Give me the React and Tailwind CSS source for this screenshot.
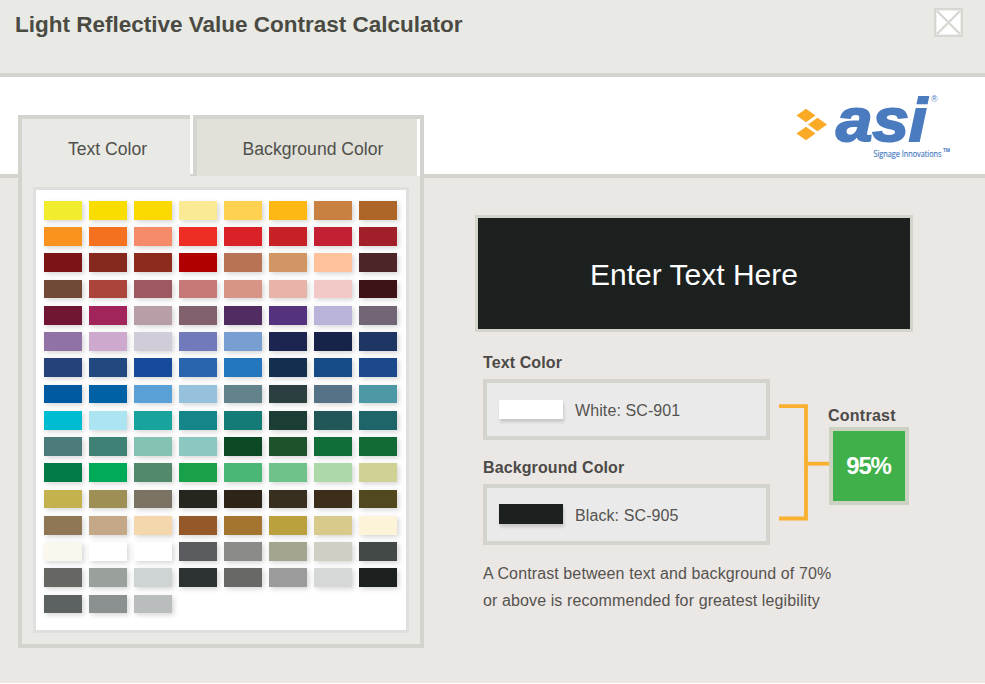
import { useState } from 'react'

const SWATCHES = [
  '#f2ec2f', '#f9dd00', '#fcd900', '#fbea94', '#fed150', '#fdb813', '#c98141', '#ad6627',
  '#f7931e', '#f47120', '#f68b69', '#ee2d24', '#da2128', '#c52126', '#c32033', '#a11f29',
  '#7c1416', '#85281e', '#8d2b1d', '#b10000', '#b77354', '#d29564', '#ffc29d', '#4b2528',
  '#714937', '#ab453b', '#9d5862', '#c67a77', '#d79585', '#e8b4a9', '#f3c9c7', '#3d1317',
  '#701632', '#a1255a', '#b89ea6', '#82616f', '#512c61', '#54327d', '#bab4da', '#726576',
  '#9172a4', '#cca9cd', '#d0cdd8', '#717bbc', '#799ed1', '#1b254f', '#18234a', '#1f3665',
  '#25427a', '#22497f', '#184a9b', '#2865ae', '#2277bd', '#122f4e', '#164d86', '#1b498b',
  '#005aa2', '#0061a4', '#58a0d5', '#96c1dc', '#63838c', '#2b3f40', '#567286', '#4d98a5',
  '#00bcd1', '#ade4f2', '#18a49d', '#148689', '#147b76', '#1b3d35', '#215759', '#1d6569',
  '#4b7c7b', '#3f8175', '#86c2b4', '#8cc8c1', '#0b4824', '#1d522a', '#116e38', '#126b35',
  '#007a47', '#00aa59', '#51896a', '#19a04b', '#4ab777', '#70c28b', '#acd8aa', '#cfd294',
  '#c3b24d', '#9e8f54', '#7a7263', '#25271f', '#2e2418', '#382f1f', '#3c2e1a', '#524820',
  '#8f7756', '#c5a888', '#f4d7ad', '#955829', '#a47530', '#bba03e', '#d7ca8b', '#fcf3d9',
  '#faf7ef', '#ffffff', '#ffffff', '#5b5c5f', '#8b8c87', '#a3a58f', '#cfcfc3', '#434946',
  '#666763', '#9aa09c', '#ced4d4', '#2d3333', '#686867', '#9b9b9b', '#d6d8d8', '#1c211f',
  '#5b6261', '#8a9190', '#babdbe',
]

function CloseButton() {
  return (
    <button title="Close" className="w-[29px] h-[29px]">
      <svg viewBox="0 0 29 29" className="block w-full h-full" fill="#fff" stroke="#d7d8d2" strokeWidth="2.4">
        <rect x="1.2" y="1.2" width="26.6" height="26.6" />
        <path d="M3 3L26 26M26 3L3 26" />
      </svg>
    </button>
  )
}

function Logo() {
  return (
    <svg width="160" height="74" viewBox="0 0 160 74" className="block overflow-visible" fontFamily="'Liberation Sans', Arial, sans-serif">
      <g fill="#fbaa26">
        <path d="M5.500 20.500L15 13.800L24.500 20.500L15 27.200Z" />
        <path d="M17 29.500L26.500 22.800L36 29.500L26.500 36.200Z" />
        <path d="M5.500 38.500L15 31.800L24.500 38.500L15 45.200Z" />
      </g>
      <text x="45" y="45.500" fontSize="62" fontWeight="700" fontStyle="italic" fill="#4b7bbf" stroke="#4b7bbf" strokeWidth="2" textLength="91" lengthAdjust="spacingAndGlyphs">asi</text>
      <text x="140" y="7" fontSize="9" fill="#4b7bbf">®</text>
      <g fill="#4b7bbf" stroke="#4b7bbf" strokeWidth="0.200">
        <text x="82.500" y="61.500" fontSize="9.500" fontFamily="'Open Sans', sans-serif" textLength="68" lengthAdjust="spacingAndGlyphs">Signage Innovations</text>
        <text x="151.500" y="60" fontSize="10" textLength="8" lengthAdjust="spacingAndGlyphs">™</text>
      </g>
    </svg>
  )
}

function Tabs() {
  return (
    <div className="flex h-[61px] text-[17.6px] text-[#50504b]">
      <button className="w-[172px] border-t-4 border-l-4 border-[#d4d4ce] bg-[#e9eae5] pl-[3px] pt-[3px]">
        Text Color
      </button>
      <div className="w-[3px] bg-white border-b-2 border-[#d4d4ce]" />
      <button className="w-[231px] border-t-4 border-x-4 border-[#d4d4ce] bg-white pr-[3px]">
        <span className="flex h-full items-center justify-center bg-[#e1e1da] pl-[12px] pt-[3px]">Background Color</span>
      </button>
    </div>
  )
}

function Palette({ onPick }) {
  return (
    <div className="h-[472px] border-4 border-t-0 border-[#d4d4ce] bg-[#e9eae5] pt-[11px] pl-[11px]">
      <div className="w-[376px] h-[446px] border-[3px] border-[#dfe0dd] bg-white pl-2 pt-[10.9px]">
        <div className="grid grid-cols-[repeat(8,38px)] gap-x-[7px] gap-y-[7.5625px]">
          {SWATCHES.map((color, i) => (
            <button
              key={i}
              onClick={() => onPick(color)}
              className="h-[18.6875px] shadow-[2px_2px_5px_rgba(0,0,0,0.17)]"
              style={{ backgroundColor: color }}
            />
          ))}
        </div>
      </div>
    </div>
  )
}

function ColorField({ label, name, color, swatchClass }) {
  return (
    <div className="h-[105px]">
      <div className="h-[27px] pt-px text-[16px] leading-[20px] font-bold tracking-[0.11px] text-[#4c4a47]">{label}</div>
      <div className="flex items-center w-[287px] h-[61px] border-4 border-[#d4d4ce] bg-[#eaeaea] pl-3">
        <span
          className={`w-16 shadow-[1px_3px_3px_rgba(0,0,0,0.15)] ${swatchClass}`}
          style={{ backgroundColor: color }}
        />
        <span className="pl-3 pt-0.5 text-[16px] tracking-[0.1px] text-[#55534f]">{name}</span>
      </div>
    </div>
  )
}

function Bracket() {
  return (
    <svg width="50" height="117" viewBox="0 0 50 117" className="block" fill="none" stroke="#f9b02f">
      <path d="M0 2.200H27V114.500H0" strokeWidth="3.800" />
      <path d="M28 59.700H50" strokeWidth="3.800" />
    </svg>
  )
}

export default function App() {
  const [textColor, setTextColor] = useState('#ffffff')

  return (
    <div className="w-[985px] h-[683px] overflow-hidden bg-[#ebe7e5] font-['Liberation_Sans',Arial,sans-serif]">
      <header className="flex justify-between h-[77px] border-b-4 border-[#d4d4ce] bg-[#e9eae5] pl-[15px] pr-[22px] pt-2">
        <h1 className="pt-px text-[22.5px] leading-[32px] font-bold text-[#4a4a43]">
          Light Reflective Value Contrast Calculator
        </h1>
        <CloseButton />
      </header>

      <div className="flex justify-end h-[101px] border-b-4 border-[#d4d4ce] bg-white pt-[18px] pr-[34px]">
        <Logo />
      </div>

      {/* Tabbed panel overlaps the logo strip */}
      <main className="flex -mt-[63px] pl-[18px]">
        <section className="relative w-[406px]">
          <Tabs />
          <Palette onPick={setTextColor} />
        </section>

        <section className="pl-[51px] pt-[100px]">
          <div
            className="flex items-center justify-center w-[438px] h-[117px] border-[3px] border-[#d3d4cc] bg-[#1c211f] pt-0.5 text-[30px]"
            style={{ color: textColor }}
          >
            Enter Text Here
          </div>

          <div className="flex pl-2 pt-5">
            <div className="w-[287px]">
              <ColorField label="Text Color" name="White: SC-901" color={textColor} swatchClass="h-[19px]" />
              <ColorField label="Background Color" name="Black: SC-905" color="#1c211f" swatchClass="h-5 -mt-px" />
            </div>
            <div className="pl-[9px] pt-[52px]">
              <Bracket />
            </div>
            <div className="pt-[53px]">
              <div className="h-[22px] -ml-px pt-px text-[16px] leading-[20px] font-bold tracking-[0.25px] text-[#4c4a47]">Contrast</div>
              <div className="flex items-center justify-center w-20 h-[78px] border-4 border-[#ccd2c2] bg-[#40b04a] pb-px pr-px text-[24px] font-bold tracking-[-1.2px] text-white">
                95%
              </div>
            </div>
          </div>

          <p className="-mt-0.5 pl-2 text-[16px] leading-[27px] tracking-[0.11px] text-[#55534f]">
            A Contrast between text and background of 70%
            <br />
            or above is recommended for greatest legibility
          </p>
        </section>
      </main>
    </div>
  )
}
